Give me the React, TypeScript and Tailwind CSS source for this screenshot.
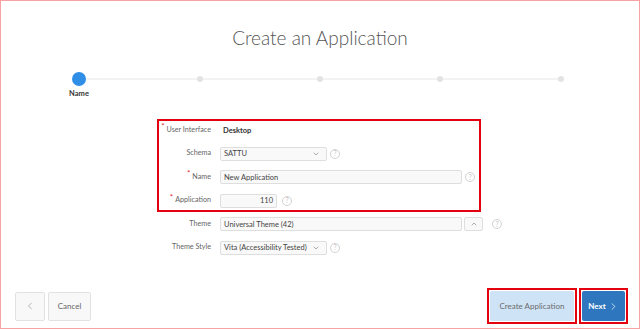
import { ChevronDown, ChevronUp, ChevronLeft, ChevronRight } from "lucide-react";
import type { ReactNode } from "react";

const Help = ({ className = "" }: { className?: string }) => (
  <span
    className={`w-[10px] h-[10px] rounded-full border border-[#d2d2d2] text-[#c4c4c4] text-[7px] leading-none flex items-center justify-center shrink-0 ${className}`}
  >
    ?
  </span>
);

const Row = ({
  label,
  required = false,
  children,
}: {
  label: string;
  required?: boolean;
  children: ReactNode;
}) => (
  <div className="flex items-center h-[18.5px]">
    <div className="w-[52px] flex justify-end items-center text-[7.2px] text-[#666] whitespace-nowrap">
      {required && (
        <span className="text-[#e0262b] text-[8px] leading-none relative -top-[4px] mr-[2px]">*</span>
      )}
      {label}
    </div>
    <div className="ml-[9px] flex items-center">{children}</div>
  </div>
);

const field =
  "h-[14px] bg-[#f9f9f9] border border-[#dedede] rounded-[2px] px-[3px] text-[7.5px] text-[#444] flex items-center";

export default function App() {
  return (
    <div className="w-[640px] h-[329px] border border-[#f8a3a3] bg-white flex flex-col font-['Lato','Noto_Sans',sans-serif]">
      <h1 className="mt-[25px] text-center text-[19px] leading-[24px] font-light text-[#555]">
        Create an Application
      </h1>

      {/* wizard progress */}
      <div className="mt-[22px] ml-[71px] flex items-center h-[14px]">
        <span className="w-[14px] h-[14px] rounded-full bg-[#2f8fe6]" />
        <span className="w-[111px] h-[2px] bg-[#f3f3f3]" />
        <span className="w-[6px] h-[6px] rounded-full bg-[#e3e3e3]" />
        <span className="w-[114px] h-[2px] bg-[#f3f3f3]" />
        <span className="w-[6px] h-[6px] rounded-full bg-[#e3e3e3]" />
        <span className="w-[114px] h-[2px] bg-[#f3f3f3]" />
        <span className="w-[6px] h-[6px] rounded-full bg-[#e3e3e3]" />
        <span className="w-[115px] h-[2px] bg-[#f3f3f3]" />
        <span className="w-[6px] h-[6px] rounded-full bg-[#e3e3e3]" />
      </div>
      <div className="mt-[3px] ml-[48px] w-[60px] text-center text-[7.5px] leading-[10px] font-bold text-[#333]">
        Name
      </div>

      {/* form */}
      <div className="mt-[20px] ml-[156px] w-[324px] border-2 border-[#e3000f] flex flex-col gap-[5px]">
        <Row label="User Interface" required>
          <span className="ml-[3px] text-[7.5px] font-bold text-[#333]">Desktop</span>
        </Row>
        <Row label="Schema">
          <div className={`${field} w-[107px] justify-between`}>
            <span>SATTU</span>
            <ChevronDown className="w-[8px] h-[8px] mr-[3px] text-[#666]" strokeWidth={1.6} />
          </div>
          <Help className="ml-[3px]" />
        </Row>
        <Row label="Name" required>
          <div className={`${field} w-[242px]`}>New Application</div>
          <Help className="ml-[3px]" />
        </Row>
        <Row label="Application" required>
          <div className={`${field} w-[57px] justify-end`}>110</div>
          <Help className="ml-[5px]" />
        </Row>
      </div>

      <div className="mt-[3px] ml-[158px] flex flex-col gap-[5px]">
        <Row label="Theme">
          <div className={`${field} w-[242px]`}>Universal Theme (42)</div>
          <button className="ml-[2px] w-[19px] h-[14px] bg-[#f9f9f9] border border-[#dedede] rounded-[2px] flex items-center justify-center">
            <ChevronUp className="w-[8px] h-[8px] text-[#666]" strokeWidth={1.6} />
          </button>
          <Help className="ml-[9px]" />
        </Row>
        <Row label="Theme Style">
          <div className={`${field} w-[107px] justify-between`}>
            <span>Vita (Accessibility Tested)</span>
            <ChevronDown className="w-[8px] h-[8px] mr-[3px] text-[#666]" strokeWidth={1.6} />
          </div>
          <Help className="ml-[3px]" />
        </Row>
      </div>

      {/* footer */}
      <div className="mt-auto pb-[4px] pl-[14px] pr-[11px] flex items-center justify-between">
        <div className="flex items-center gap-[3px]">
          <button className="w-[30px] h-[29px] bg-[#f8f8f8] border border-[#e2e2e2] rounded-[2px] flex items-center justify-center">
            <ChevronLeft className="w-[12px] h-[12px] text-[#888]" strokeWidth={1.2} />
          </button>
          <button className="w-[43px] h-[29px] bg-[#f8f8f8] border border-[#e2e2e2] rounded-[2px] text-[8px] text-[#666]">
            Cancel
          </button>
        </div>
        <div className="flex items-center gap-[2px]">
          <div className="border-2 border-[#e3000f] p-[1px]">
            <button className="w-[84px] h-[30px] bg-[#cfe3f7] rounded-[2px] text-[8px] text-[#6b6b6b]">
              Create Application
            </button>
          </div>
          <div className="border-2 border-[#e3000f] p-[1px]">
            <button className="w-[43px] h-[30px] bg-[#2e77be] rounded-[2px] text-[8px] font-bold text-white flex items-center justify-center gap-[2px]">
              Next
              <ChevronRight className="w-[11px] h-[11px]" strokeWidth={1.6} />
            </button>
          </div>
        </div>
      </div>
    </div>
  );
}
